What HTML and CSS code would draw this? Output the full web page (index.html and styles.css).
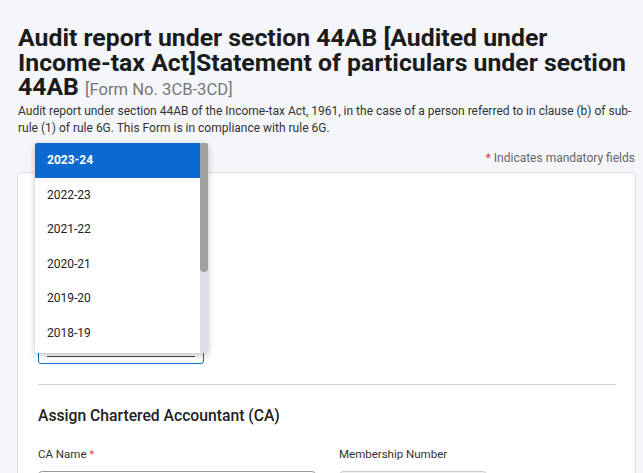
FILE: index.html
```html
<!DOCTYPE html>
<html lang="en">
<head>
<meta charset="utf-8">
<title>Audit report under section 44AB</title>
<link rel="stylesheet" href="styles.css">
</head>
<body>
<main class="page">
  <header class="page-head">
    <h1 class="title">Audit report under section 44AB [Audited under <span class="nowrap">Income-tax</span> Act]Statement of particulars under section 44AB <span class="form-no">[Form No. 3CB-3CD]</span></h1>
    <p class="desc">Audit report under section 44AB of the Income-tax Act, 1961, in the case of a person referred to in clause (b) of sub-rule (1) of rule 6G. This Form is in compliance with rule 6G.</p>
  </header>
  <div class="mandatory"><span class="req">*</span> Indicates mandatory fields</div>
  <section class="card">
    <div class="ay-block">
      <div class="field-label">Assessment Year <span class="req">*</span></div>
      <div class="select-box"><span class="select-line"></span></div>
    </div>
    <hr class="divider">
    <h2 class="section-title">Assign Chartered Accountant (CA)</h2>
    <div class="row">
      <div class="field ca-name">
        <div class="field-label">CA Name <span class="req">*</span></div>
        <div class="input"></div>
      </div>
      <div class="field member">
        <div class="field-label">Membership Number</div>
        <div class="input disabled"></div>
      </div>
    </div>
  </section>
  <ul class="dropdown">
    <li class="opt selected">2023-24</li>
    <li class="opt">2022-23</li>
    <li class="opt">2021-22</li>
    <li class="opt">2020-21</li>
    <li class="opt">2019-20</li>
    <li class="opt">2018-19</li>
    <li class="scrollbar"><span class="thumb"></span></li>
  </ul>
</main>
</body>
</html>
```

FILE: styles.css
```css
* { box-sizing: border-box; }
html, body {
  margin: 0;
  padding: 0;
  background: #f5f6fa;
  font-family: Roboto, "Noto Sans", "Liberation Sans", sans-serif;
  color: #222;
  overflow: hidden;
  height: 473px;
}
.page {
  position: relative;
  padding: 26px 8px 0 18px;
}
.title {
  margin: 0;
  font-size: 24.8px;
  line-height: 24.5px;
  font-weight: 700;
  color: #1b1b1b;
}
.nowrap { white-space: nowrap; }
.form-no {
  font-size: 16.6px;
  font-weight: 400;
  color: #777;
}
.desc {
  margin: 0;
  font-size: 12px;
  line-height: 17px;
  color: #333;
}
.mandatory {
  text-align: right;
  font-size: 12px;
  line-height: 17px;
  color: #666;
  margin-top: 13px;
}
.req { color: #e0433d; }
.card {
  margin-top: 5px;
  margin-left: -1px;
  width: 619px;
  background: #fff;
  border: 1px solid #dcdde8;
  border-radius: 4px;
  padding: 0 19px 40px 20px;
  min-height: 320px;
}
.ay-block {
  padding-top: 123px;
  width: 166px;
}
.ay-block .field-label {
  margin-bottom: 20px;
}
.select-box {
  height: 32px;
  border: 1px solid #0a6ad0;
  border-radius: 3px;
  padding: 23px 8px 0;
}
.select-line {
  display: block;
  width: 100%;
  height: 1px;
  background: #444;
}
.divider {
  margin: 20px 0 0;
  border: 0;
  border-top: 1px solid #d3d3d3;
}
.section-title {
  margin: 21px 0 0;
  font-size: 15.7px;
  line-height: 20px;
  font-weight: 500;
  color: #222;
}
.row {
  display: flex;
  gap: 23px;
  margin-top: 20px;
}
.field-label {
  font-size: 11.5px;
  line-height: 16px;
  color: #333;
}
.field .input {
  margin-top: 9px;
  height: 32px;
  border: 1px solid #999;
  border-radius: 4px;
  background: #fff;
}
.ca-name { width: 278px; }
.member { width: 148px; }
.field .input.disabled {
  background: #f0f0f0;
  border-color: #ccc;
}
.dropdown {
  position: absolute;
  left: 35px;
  top: 143px;
  width: 173px;
  height: 210px;
  margin: 0;
  padding: 0 8px 0 0;
  list-style: none;
  background: #fff;
  box-shadow: 0 2px 6px rgba(0,0,0,0.25);
  border-radius: 2px;
  overflow: hidden;
}
.opt {
  height: 34.6px;
  line-height: 34.6px;
  padding-left: 12px;
  font-size: 12px;
  color: #222;
}
.opt.selected {
  background: #0a6ad0;
  color: #fff;
  font-weight: 700;
}
.scrollbar {
  position: absolute;
  right: 0;
  top: 0;
  width: 8px;
  height: 100%;
  background: #dcdde9;
}
.thumb {
  display: block;
  width: 8px;
  height: 129px;
  background: #a0a0a0;
  border-radius: 0 0 4px 4px;
}
```
